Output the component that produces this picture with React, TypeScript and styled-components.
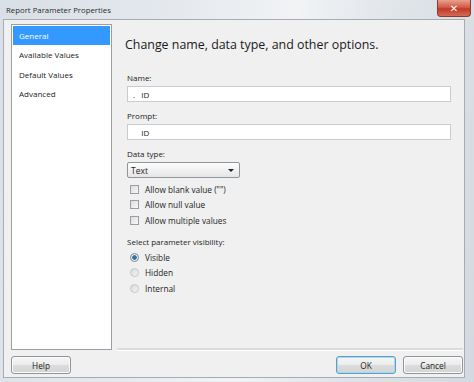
import styled, { createGlobalStyle } from 'styled-components';

const GlobalStyle = createGlobalStyle`
  html, body {
    margin: 0;
    padding: 0;
    width: 474px;
    height: 382px;
    overflow: hidden;
  }
  body {
    font-family: "Open Sans", "DejaVu Sans", sans-serif;
    font-size: 8.5px;
    color: #1e1e1e;
  }
`;

/* 창 전체 (유리 프레임) */
const Window = styled.div`
  width: 474px;
  height: 382px;
  box-sizing: border-box;
  display: flex;
  flex-direction: column;
  background: linear-gradient(100deg, #d9dfe6 0%, #e6eaef 35%, #f1f3f5 55%, #dfe4e9 75%, #d3d9e0 100%);
  padding: 0 9px 4px 3px;
`;

const TitleBar = styled.div`
  height: 19px;
  display: flex;
  align-items: center;
  justify-content: space-between;
  padding-left: 3px;
`;

const Title = styled.span`
  font-size: 7.8px;
  color: #2a2a2a;
  padding-top: 1px;
`;

const CloseButton = styled.div`
  width: 34px;
  height: 17px;
  margin-top: -3px;
  margin-right: -6px;
  border-radius: 0 0 4px 4px;
  border: 1px solid #8a3a30;
  border-top: none;
  background: linear-gradient(#e8a090 0%, #d45c48 45%, #c0392a 55%, #d66a52 100%);
  color: #fff;
  font-size: 10px;
  font-weight: bold;
  display: flex;
  align-items: center;
  justify-content: center;
  box-sizing: border-box;
`;

/* 본문 영역 */
const Client = styled.div`
  flex: 1;
  display: flex;
  flex-direction: column;
  background: #f0f0f0;
  border: 1px solid #a7acb2;
  box-sizing: border-box;
`;

const Body = styled.div`
  display: flex;
  padding: 4px 1px 0 7px;
  height: 330px;
  box-sizing: border-box;
`;

const Sidebar = styled.div`
  width: 101px;
  height: 326px;
  box-sizing: border-box;
  background: #fff;
  border: 1px solid #9a9fa6;
  padding: 1px;
`;

const NavItem = styled.div<{ selected?: boolean }>`
  height: 19.3px;
  display: flex;
  align-items: center;
  padding-left: 6px;
  font-size: 8px;
  background: ${({ selected }) => (selected ? '#3399ff' : 'transparent')};
  color: ${({ selected }) => (selected ? '#fff' : '#222')};
`;

const Content = styled.div`
  flex: 1;
  margin-left: 5px;
  border-bottom: 2px solid #dcdcdc;
  box-shadow: 0 1px 0 #fff;
  padding: 12px 10px 0 10px;
  box-sizing: border-box;
`;

const Heading = styled.div`
  font-size: 12.4px;
  line-height: 17px;
  color: #1a1a1a;
  margin-left: -2px;
  margin-bottom: 19px;
`;

const FieldLabel = styled.div`
  font-size: 8px;
  margin-bottom: 3px;
  color: #222;
`;

const TextInput = styled.div`
  width: 324px;
  height: 16px;
  box-sizing: border-box;
  border: 1px solid #c9ccd0;
  background: #fff;
  display: flex;
  align-items: center;
  padding-left: 5px;
  font-size: 8px;
  color: #1e1e1e;
  margin-bottom: 8px;
  white-space: pre;
`;

const Select = styled.div`
  width: 113px;
  height: 16px;
  box-sizing: border-box;
  border: 1px solid #8f959c;
  border-radius: 2px;
  background: linear-gradient(#fdfdfd, #e6e6e6);
  display: flex;
  align-items: center;
  justify-content: space-between;
  padding: 0 5px 0 3px;
  font-size: 8.5px;
  margin-bottom: 4px;
`;

const Arrow = styled.span`
  width: 0;
  height: 0;
  border-left: 3px solid transparent;
  border-right: 3px solid transparent;
  border-top: 3px solid #222;
`;

const OptionRow = styled.div`
  display: flex;
  align-items: center;
  height: 15.3px;
  padding-left: 3px;
  font-size: 8.3px;
`;

const CheckBox = styled.span`
  width: 9px;
  height: 9px;
  box-sizing: border-box;
  border: 1px solid #9a9ea4;
  background: linear-gradient(135deg, #dcdcdc, #f8f8f8);
  margin-right: 6px;
`;

const Radio = styled.span<{ checked?: boolean }>`
  width: 9px;
  height: 9px;
  box-sizing: border-box;
  border-radius: 50%;
  border: 1px solid ${({ checked }) => (checked ? '#7b8a9a' : '#c2c5c9')};
  background: ${({ checked }) =>
    checked ? 'radial-gradient(circle, #3d6e9c 0 2px, #e8eef3 2.5px)' : 'linear-gradient(135deg, #d8d8d8, #f6f6f6)'};
  margin-right: 6px;
`;

const SectionLabel = styled.div`
  font-size: 8px;
  margin-top: 8px;
  margin-bottom: 3px;
`;

const Footer = styled.div`
  display: flex;
  align-items: center;
  padding: 6px 1px 0 7px;
  gap: 7px;
`;

const Button = styled.div<{ primary?: boolean }>`
  width: 60px;
  height: 18px;
  box-sizing: border-box;
  border: 1px solid ${({ primary }) => (primary ? '#5aa0c8' : '#8f959c')};
  border-radius: 3px;
  background: linear-gradient(#f6f6f6 0%, #ececec 50%, #dcdcdc 51%, #d4d4d4 100%);
  box-shadow: inset 0 0 0 1px ${({ primary }) => (primary ? '#a8d8ee' : '#fafafa')};
  display: flex;
  align-items: center;
  justify-content: center;
  font-size: 8.3px;
`;

const Spacer = styled.div`
  flex: 1;
`;

export default function App() {
  return (
    <>
      <GlobalStyle />
      <Window>
        <TitleBar>
          <Title>Report Parameter Properties</Title>
          <CloseButton>✕</CloseButton>
        </TitleBar>
        <Client>
          <Body>
            <Sidebar>
              <NavItem selected>General</NavItem>
              <NavItem>Available Values</NavItem>
              <NavItem>Default Values</NavItem>
              <NavItem>Advanced</NavItem>
            </Sidebar>
            <Content>
              <Heading>Change name, data type, and other options.</Heading>
              <FieldLabel>Name:</FieldLabel>
              <TextInput>{'.   ID'}</TextInput>
              <FieldLabel>Prompt:</FieldLabel>
              <TextInput>{'    ID'}</TextInput>
              <FieldLabel>Data type:</FieldLabel>
              <Select>
                <span>Text</span>
                <Arrow />
              </Select>
              <OptionRow><CheckBox />Allow blank value ("")</OptionRow>
              <OptionRow><CheckBox />Allow null value</OptionRow>
              <OptionRow><CheckBox />Allow multiple values</OptionRow>
              <SectionLabel>Select parameter visibility:</SectionLabel>
              <OptionRow><Radio checked />Visible</OptionRow>
              <OptionRow><Radio />Hidden</OptionRow>
              <OptionRow><Radio />Internal</OptionRow>
            </Content>
          </Body>
          <Footer>
            <Button>Help</Button>
            <Spacer />
            <Button primary>OK</Button>
            <Button>Cancel</Button>
          </Footer>
        </Client>
      </Window>
    </>
  );
}
